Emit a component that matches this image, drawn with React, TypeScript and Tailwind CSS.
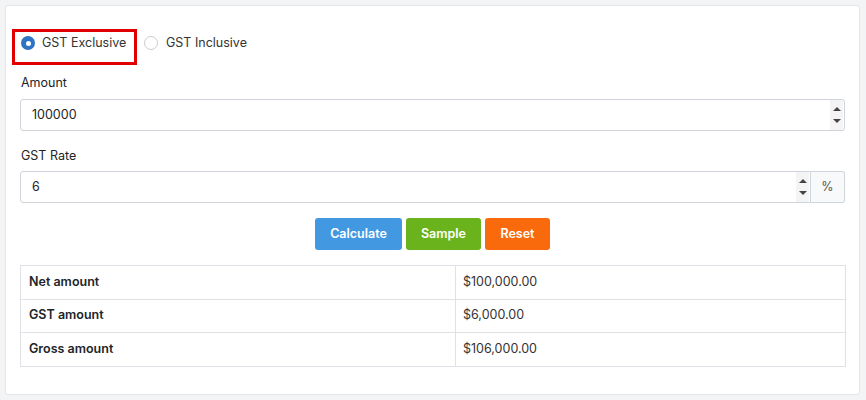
import React from "react";

function Spinner() {
  return (
    <div className="flex flex-col items-center justify-center gap-[8px] w-[13px] h-[30px] bg-[#f4f4f4]">
      <svg width="8" height="4" viewBox="0 0 8 4"><path d="M0 4 L4 0 L8 4 Z" fill="#444" /></svg>
      <svg width="8" height="4" viewBox="0 0 8 4"><path d="M0 0 L8 0 L4 4 Z" fill="#444" /></svg>
    </div>
  );
}

export default function App() {
  const font = { fontFamily: "Inter, 'Noto Sans', sans-serif" };
  return (
    <div className="w-[866px] h-[400px] bg-[#f3f4f6] p-[5px] text-[#212529]" style={font}>
      <div className="w-[855px] h-[390px] bg-white border border-[#e3e6ea] rounded-[3px] px-[14px] pt-[23px]">
        <div className="flex items-start h-[36px]">
          <div className="flex items-center h-[36px] w-[125px] border-[3px] border-[#e00000] pl-[6px] pb-[8px] ml-[-8px]">
            <span className="w-[14px] h-[14px] rounded-full bg-[#2f73c5] flex items-center justify-center">
              <span className="w-[5px] h-[5px] rounded-full bg-white" />
            </span>
            <span className="ml-[7px] text-[12.5px] text-[#333]">GST Exclusive</span>
          </div>
          <div className="flex items-center h-[36px] pt-[3px] pb-[11px] ml-[7px]">
            <span className="w-[14px] h-[14px] rounded-full bg-white border border-[#c8ccd0]" />
            <span className="ml-[8px] text-[12.5px] text-[#333]">GST Inclusive</span>
          </div>
        </div>

        <div className="mt-[8px] text-[12.5px] pl-[1px] h-[19px] leading-[19px]">Amount</div>
        <div className="mt-[7px] flex items-center h-[32px] border border-[#ced4da] rounded-[3px] pl-[11px] pr-[1px]">
          <span className="flex-1 text-[12.5px]">100000</span>
          <Spinner />
        </div>

        <div className="mt-[15px] text-[12.5px] pl-[1px] h-[19px] leading-[19px]">GST Rate</div>
        <div className="mt-[6px] flex h-[32px]">
          <div className="flex-1 flex items-center border border-[#ced4da] rounded-l-[3px] pl-[11px] pr-[1px]">
            <span className="flex-1 text-[12.5px]">6</span>
            <Spinner />
          </div>
          <div className="w-[34px] flex items-center justify-center border border-l-0 border-[#ced4da] rounded-r-[3px] bg-[#f8f9fa] text-[12.5px] text-[#555]">
            %
          </div>
        </div>

        <div className="mt-[15px] flex justify-center gap-[4px] h-[32px]">
          <button className="w-[87px] rounded-[3px] bg-[#4299e1] text-white text-[12.5px] font-semibold">Calculate</button>
          <button className="w-[75px] rounded-[3px] bg-[#6bb31c] text-white text-[12.5px] font-semibold">Sample</button>
          <button className="w-[65px] rounded-[3px] bg-[#f96a0c] text-white text-[12.5px] font-semibold">Reset</button>
        </div>

        <table className="mt-[15px] w-[826px] border-collapse text-[12.5px]">
          <tbody>
            {[
              ["Net amount", "$100,000.00"],
              ["GST amount", "$6,000.00"],
              ["Gross amount", "$106,000.00"],
            ].map(([a, b]) => (
              <tr key={a} className="h-[33.5px]">
                <td className="w-[435px] border border-[#dee2e6] pl-[8px] font-semibold text-[#212529]">{a}</td>
                <td className="border border-[#dee2e6] pl-[7px] text-[#333]">{b}</td>
              </tr>
            ))}
          </tbody>
        </table>
      </div>
    </div>
  );
}
